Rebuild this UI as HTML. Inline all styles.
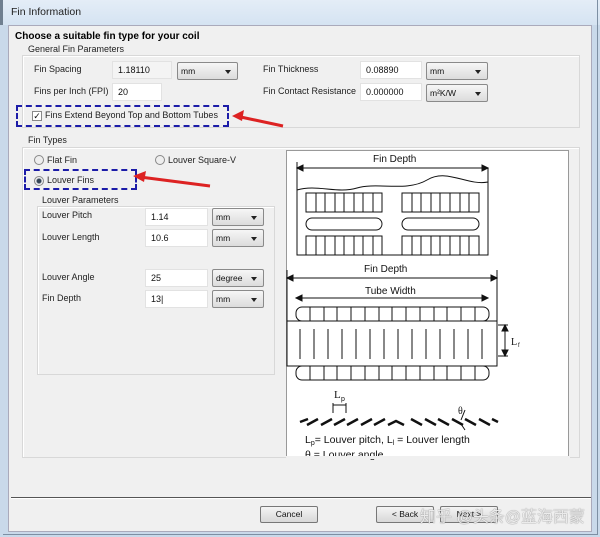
<!DOCTYPE html>
<html><head><meta charset="utf-8"><style>
*{margin:0;padding:0;box-sizing:border-box}
body{width:600px;height:537px;overflow:hidden;background:#c9d9ea;font-family:"Liberation Sans",sans-serif;font-size:9px;color:#111;position:relative}
.a{position:absolute}
.title{left:0;top:0;width:600px;height:25px;background:linear-gradient(#e4edf7,#d5e3f2);border-left:3px solid #6f7f90}
.title span{position:absolute;left:8px;top:6px;font-size:10.5px;color:#222}
.frame{left:3px;top:0;width:595px;height:535px;border:1px solid #7d8fa3;border-top:none;border-left:none}
.content{left:8px;top:25px;width:584px;height:507px;background:#f0f0f0;border:1px solid #aab}
.grp{border:1px solid #d8d8d8;box-shadow:inset 1px 1px 0 #fff}
.lbl{font-size:9px;color:#222;white-space:nowrap}
.inp{background:#fff;border:1px solid #e2e2e2;height:18px;font-size:9px;padding:3px 5px}
.sel{height:18px;border:1px solid #8a8a8a;border-radius:2px;background:linear-gradient(#f6f6f6,#dcdcdc);font-size:8.5px;padding:3px 3px}
.sel:after{content:"";position:absolute;right:6px;top:7px;border:3px solid transparent;border-top:4px solid #222}
.dash{border:2px dashed #1c1ca8}
.radio{width:10px;height:10px;border:1px solid #888;border-radius:50%;background:#eee}
.btn{height:17px;border:1px solid #777;border-radius:2px;background:linear-gradient(#f4f4f4,#d8d8d8);font-size:8.5px;text-align:center;line-height:15px}
</style></head><body>
<div class="a title"><span>Fin Information</span></div>
<div class="a frame"></div>
<div class="a content"></div>
<div class="a lbl" style="left:15px;top:31px;font-weight:bold;font-size:10px;color:#000">Choose a suitable fin type for your coil</div>
<div class="a lbl" style="left:28px;top:44px">General Fin Parameters</div>
<div class="a grp" style="left:22px;top:55px;width:558px;height:73px"></div>
<div class="a lbl" style="left:34px;top:64px">Fin Spacing</div>
<div class="a inp" style="left:112px;top:61px;width:60px;background:#f4f4f4">1.18110</div>
<div class="a sel" style="left:177px;top:62px;width:61px">mm</div>
<div class="a lbl" style="left:34px;top:86px">Fins per Inch (FPI)</div>
<div class="a inp" style="left:112px;top:83px;width:50px">20</div>
<div class="a lbl" style="left:263px;top:64px">Fin Thickness</div>
<div class="a inp" style="left:360px;top:61px;width:62px">0.08890</div>
<div class="a sel" style="left:426px;top:62px;width:62px">mm</div>
<div class="a lbl" style="left:263px;top:86px">Fin Contact Resistance</div>
<div class="a inp" style="left:360px;top:83px;width:62px">0.000000</div>
<div class="a sel" style="left:426px;top:84px;width:62px">m²K/W</div>
<div class="a dash" style="left:16px;top:105px;width:213px;height:22px"></div>
<div class="a" style="left:32px;top:111px;width:10px;height:10px;border:1px solid #888;background:#fff;font-size:9px;line-height:8px;text-align:center">✓</div>
<div class="a lbl" style="left:45px;top:110px">Fins Extend Beyond Top and Bottom Tubes</div>
<div class="a lbl" style="left:28px;top:135px">Fin Types</div>
<div class="a grp" style="left:22px;top:147px;width:558px;height:311px"></div>
<div class="a radio" style="left:34px;top:155px"></div>
<div class="a lbl" style="left:47px;top:155px">Flat Fin</div>
<div class="a radio" style="left:155px;top:155px"></div>
<div class="a lbl" style="left:168px;top:155px">Louver Square-V</div>
<div class="a dash" style="left:24px;top:169px;width:113px;height:21px"></div>
<div class="a radio" style="left:34px;top:176px;background:radial-gradient(#345 2px,#eee 3px)"></div>
<div class="a lbl" style="left:47px;top:175px">Louver Fins</div>
<div class="a lbl" style="left:42px;top:195px">Louver Parameters</div>
<div class="a grp" style="left:37px;top:206px;width:238px;height:169px"></div>
<div class="a lbl" style="left:42px;top:210px">Louver Pitch</div>
<div class="a inp" style="left:145px;top:208px;width:63px">1.14</div>
<div class="a sel" style="left:212px;top:208px;width:52px">mm</div>
<div class="a lbl" style="left:42px;top:232px">Louver Length</div>
<div class="a inp" style="left:145px;top:229px;width:63px">10.6</div>
<div class="a sel" style="left:212px;top:229px;width:52px">mm</div>
<div class="a lbl" style="left:42px;top:272px">Louver Angle</div>
<div class="a inp" style="left:145px;top:269px;width:63px">25</div>
<div class="a sel" style="left:212px;top:269px;width:52px">degree</div>
<div class="a lbl" style="left:42px;top:293px">Fin Depth</div>
<div class="a inp" style="left:145px;top:290px;width:63px">13|</div>
<div class="a sel" style="left:212px;top:290px;width:52px">mm</div>
<div class="a" style="left:286px;top:150px;width:283px;height:308px;background:#fff;border:1px solid #999"></div>
<svg class="a" style="left:0;top:0" width="600" height="537" font-family="Liberation Sans" fill="none" stroke="#111">
<path d="M283 126 L236 116" stroke="#d22" stroke-width="3"/><path d="M232 116 L244 110 L242 121Z" fill="#d22" stroke="none"/>
<path d="M210 186 L140 177" stroke="#d22" stroke-width="3"/><path d="M133 176 L146 171 L144 182Z" fill="#d22" stroke="none"/>
<g stroke-width="1">
<text x="373" y="162" fill="#111" stroke="none" font-size="10">Fin Depth</text>
<path d="M297 168H488M297 168l6-3v6zM488 168l-6-3v6z" fill="#111"/>
<path d="M297 162V255H488V168M297 190c20-6 40 4 60-2s50 4 70-8 40 6 61 2"/>
<path d="M306 193h76v19h-76zM402 193h77v19h-77zM306 236h76v19h-76zM402 236h77v19h-77z"/>
<path d="M316 193v19M325 193v19M335 193v19M344 193v19M354 193v19M363 193v19M373 193v19M412 193v19M421 193v19M431 193v19M440 193v19M450 193v19M460 193v19M469 193v19"/>
<path d="M316 236v19M325 236v19M335 236v19M344 236v19M354 236v19M363 236v19M373 236v19M412 236v19M421 236v19M431 236v19M440 236v19M450 236v19M460 236v19M469 236v19"/>
<rect x="306" y="218" width="76" height="12" rx="6"/><rect x="402" y="218" width="77" height="12" rx="6"/>
<text x="364" y="272" fill="#111" stroke="none" font-size="10">Fin Depth</text>
<path d="M287 270V366M497 270V321M287 278H497M287 278l6-3v6zM497 278l-6-3v6z" fill="#111"/>
<text x="365" y="294" fill="#111" stroke="none" font-size="10">Tube Width</text>
<path d="M296 298H488M296 298l6-3v6zM488 298l-6-3v6z" fill="#111"/>
<rect x="296" y="307" width="193" height="14" rx="6"/><rect x="296" y="366" width="193" height="14" rx="6"/>
<rect x="287" y="321" width="210" height="45"/>
<path d="M310 307v14M324 307v14M337 307v14M351 307v14M365 307v14M379 307v14M392 307v14M406 307v14M420 307v14M434 307v14M447 307v14M461 307v14M475 307v14"/>
<path d="M310 366v14M324 366v14M337 366v14M351 366v14M365 366v14M379 366v14M392 366v14M406 366v14M420 366v14M434 366v14M447 366v14M461 366v14M475 366v14"/>
<path d="M300 329v30M314 329v30M328 329v30M342 329v30M356 329v30M370 329v30M384 329v30M398 329v30M412 329v30M426 329v30M440 329v30M454 329v30M468 329v30M482 329v30"/>
<path d="M498 325h10M498 356h10M505 325v31M505 325l-3 6h6zM505 356l-3-6h6z" fill="#111"/>
<text x="511" y="345" fill="#111" stroke="none" font-size="10" font-family="Liberation Serif">L</text><text x="518" y="347" fill="#111" stroke="none" font-size="6">f</text>
<text x="334" y="398" fill="#111" stroke="none" font-size="11" font-family="Liberation Serif">L</text><text x="341" y="401" fill="#111" stroke="none" font-size="7">p</text>
<path d="M333 403V413M346 403V413M333 405h13"/>
<g stroke-width="2.5"><path d="M300 422l8-3M307 425l11-6M321 425l11-6M334 425l11-6M347 425l11-6M361 425l11-6M374 425l11-6M388 425l8-4 8 4M411 419l11 6M425 419l11 6M438 419l11 6M452 419l11 6M465 419l11 6M479 419l11 6M492 419l6 3"/></g>
<text x="458" y="414" fill="#111" stroke="none" font-size="10" font-family="Liberation Serif">θ</text>
<path d="M465 410l-4 10M465 430l-4-6"/>
<text x="305" y="443" fill="#111" stroke="none" font-size="10.5">L<tspan font-size="7" dy="2">p</tspan><tspan dy="-2">= Louver pitch, L</tspan><tspan font-size="7" dy="2">l</tspan><tspan dy="-2"> = Louver length</tspan></text>
<text x="305" y="458" fill="#111" stroke="none" font-size="10.5">θ = Louver angle</text>
</g>
</svg>
<div class="a" style="left:286px;top:456px;width:284px;height:3px;background:#f0f0f0"></div>
<div class="a" style="left:11px;top:497px;width:580px;height:1px;background:#555"></div>
<div class="a" style="left:11px;top:498px;width:580px;height:1px;background:#fff"></div>
<div class="a btn" style="left:260px;top:506px;width:58px">Cancel</div>
<div class="a btn" style="left:376px;top:506px;width:58px">&lt; Back</div>
<div class="a btn" style="left:440px;top:506px;width:58px">Next &gt;</div>
<div class="a" style="left:420px;top:503px;font-family:'Liberation Sans','Noto Sans CJK SC',sans-serif;font-size:16px;color:rgba(255,255,255,.85);text-shadow:0 0 1px #555">知乎 @头条@蓝海西蒙</div>
</body></html>
